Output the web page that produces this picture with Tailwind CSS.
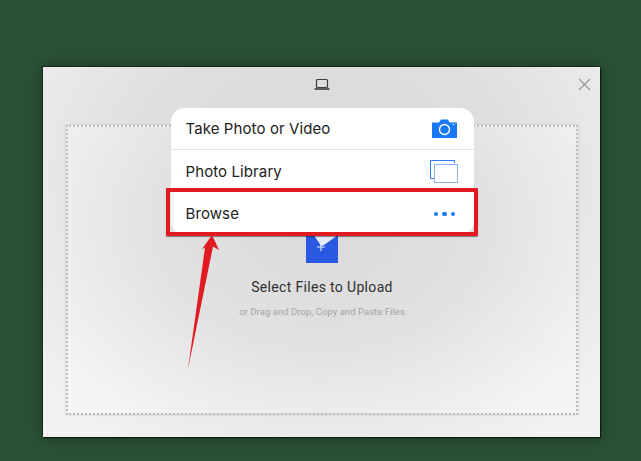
<!doctype html>
<html><head><meta charset="utf-8"><script src="https://cdn.jsdelivr.net/npm/@tailwindcss/browser@4"></script></head>
<body class="m-0">
<div class="relative w-[641px] h-[461px] overflow-hidden bg-[#2a5135] font-['Roboto',sans-serif] pt-[67px] pl-[43px]">
  <div class="relative w-[557px] h-[370px] bg-[radial-gradient(ellipse_68%_85%_at_50%_30%,#d9d9d9_0%,#dfdfdf_50%,#f2f2f2_100%)] shadow-[-1px_-1px_0_#12291a,1px_1px_1px_#0c1c11,0_0_14px_rgba(0,0,0,0.35)] pt-[58px] pl-[23px]">
    <div class="flex justify-center absolute left-0 right-0 top-[11px]">
      <svg width="16" height="13" viewBox="0 0 16 13" fill="none"><rect x="2.500" y="1.500" width="11" height="8" rx="1" stroke="#3c3c3c" stroke-width="1.200"/><path d="M0.500 11h15" stroke="#3c3c3c" stroke-width="1.600"/></svg>
    </div>
    <svg class="absolute left-[535px] top-[11px]" width="13" height="13" viewBox="0 0 13 13"><path d="M1 1l11 11M12 1L1 12" stroke="#9a9a9a" stroke-width="1.300"/></svg>
    <div class="w-[512px] h-[290px] border-2 border-dotted border-[#bdbdbd] shadow-[0_0_2px_rgba(0,0,0,0.2)] bg-[radial-gradient(ellipse_64%_85%_at_50%_33%,#dadada_0%,#e1e1e1_50%,#f5f5f5_100%)] flex flex-col items-center pt-[104px]">
      <svg width="32" height="32" viewBox="0 0 32 32" class="mr-[1px]"><path d="M0 0h32v32H0z" fill="#2a58e0"/><path d="M5 0h27v4L18 14q-2 1.500-3.500 0z" fill="#e3ebfa"/><path d="M15 12v8M11 16h8" stroke="#e3ebfa" stroke-width="1.200"/></svg>
      <p class="mt-[15px] text-[14px] leading-[18px] tracking-[0.33px] text-[#2f2f2f]">Select Files to Upload</p>
      <p class="mt-[10px] text-[9.500px] leading-[12px] tracking-[0.05px] text-[#a3a3a3]">or Drag and Drop, Copy and Paste Files</p>
    </div>
  </div>

  <div class="absolute left-[171px] top-[108px] w-[303px] h-[127px] bg-white rounded-[14px] text-[15px] tracking-[0.1px] font-['Inter',sans-serif] text-[#222] overflow-hidden">
    <div class="h-[42px] flex items-center justify-between pl-[14.500px] pr-[17px] border-b border-[#e2e2e2]">
      <span class="pt-[1px]">Take Photo or Video</span>
      <svg width="25" height="19" viewBox="0 0 25 19"><path d="M0 3.500h7L9 .5h7l1.500 3 H25v15.500H0z" fill="#1a78f5"/><circle cx="12.500" cy="10.500" r="5" fill="none" stroke="#fff" stroke-width="1.400"/><circle cx="21.500" cy="5.500" r="0.800" fill="#fff"/></svg>
    </div>
    <div class="h-[43px] flex items-center justify-between pl-[14.500px] pr-[16px]">
      <span class="pt-[1px]">Photo Library</span>
      <svg width="28" height="23" viewBox="0 0 28 23" fill="none"><path d="M24.500 3V.5H.5v18H4" stroke="#2f7cf2" stroke-width="1"/><rect x="4.500" y="4.500" width="23" height="18" fill="#fff" stroke="#8fb4f5"/></svg>
    </div>
    <div class="h-[42px] flex items-center justify-between pl-[14.500px] pr-[19px]">
      <span>Browse</span>
      <span class="flex gap-[4px]"><i class="w-[4.500px] h-[4.500px] rounded-full bg-[#1a78f5]"></i><i class="w-[4.500px] h-[4.500px] rounded-full bg-[#1a78f5]"></i><i class="w-[4.500px] h-[4.500px] rounded-full bg-[#1a78f5]"></i></span>
    </div>
  </div>

  <div class="absolute left-[166px] top-[188px] w-[312px] h-[48px] border-[4px] border-[#e21a22] rounded-[1px] shadow-[0_1px_1px_rgba(0,0,0,0.45)]"></div>
  <svg class="absolute left-0 top-0" width="641" height="461" viewBox="0 0 641 461"><path d="M188 369L205 247.500L202 249L212 235L219 250L213 246.500Z" fill="#e21a22"/></svg>
</div>
</body></html>
